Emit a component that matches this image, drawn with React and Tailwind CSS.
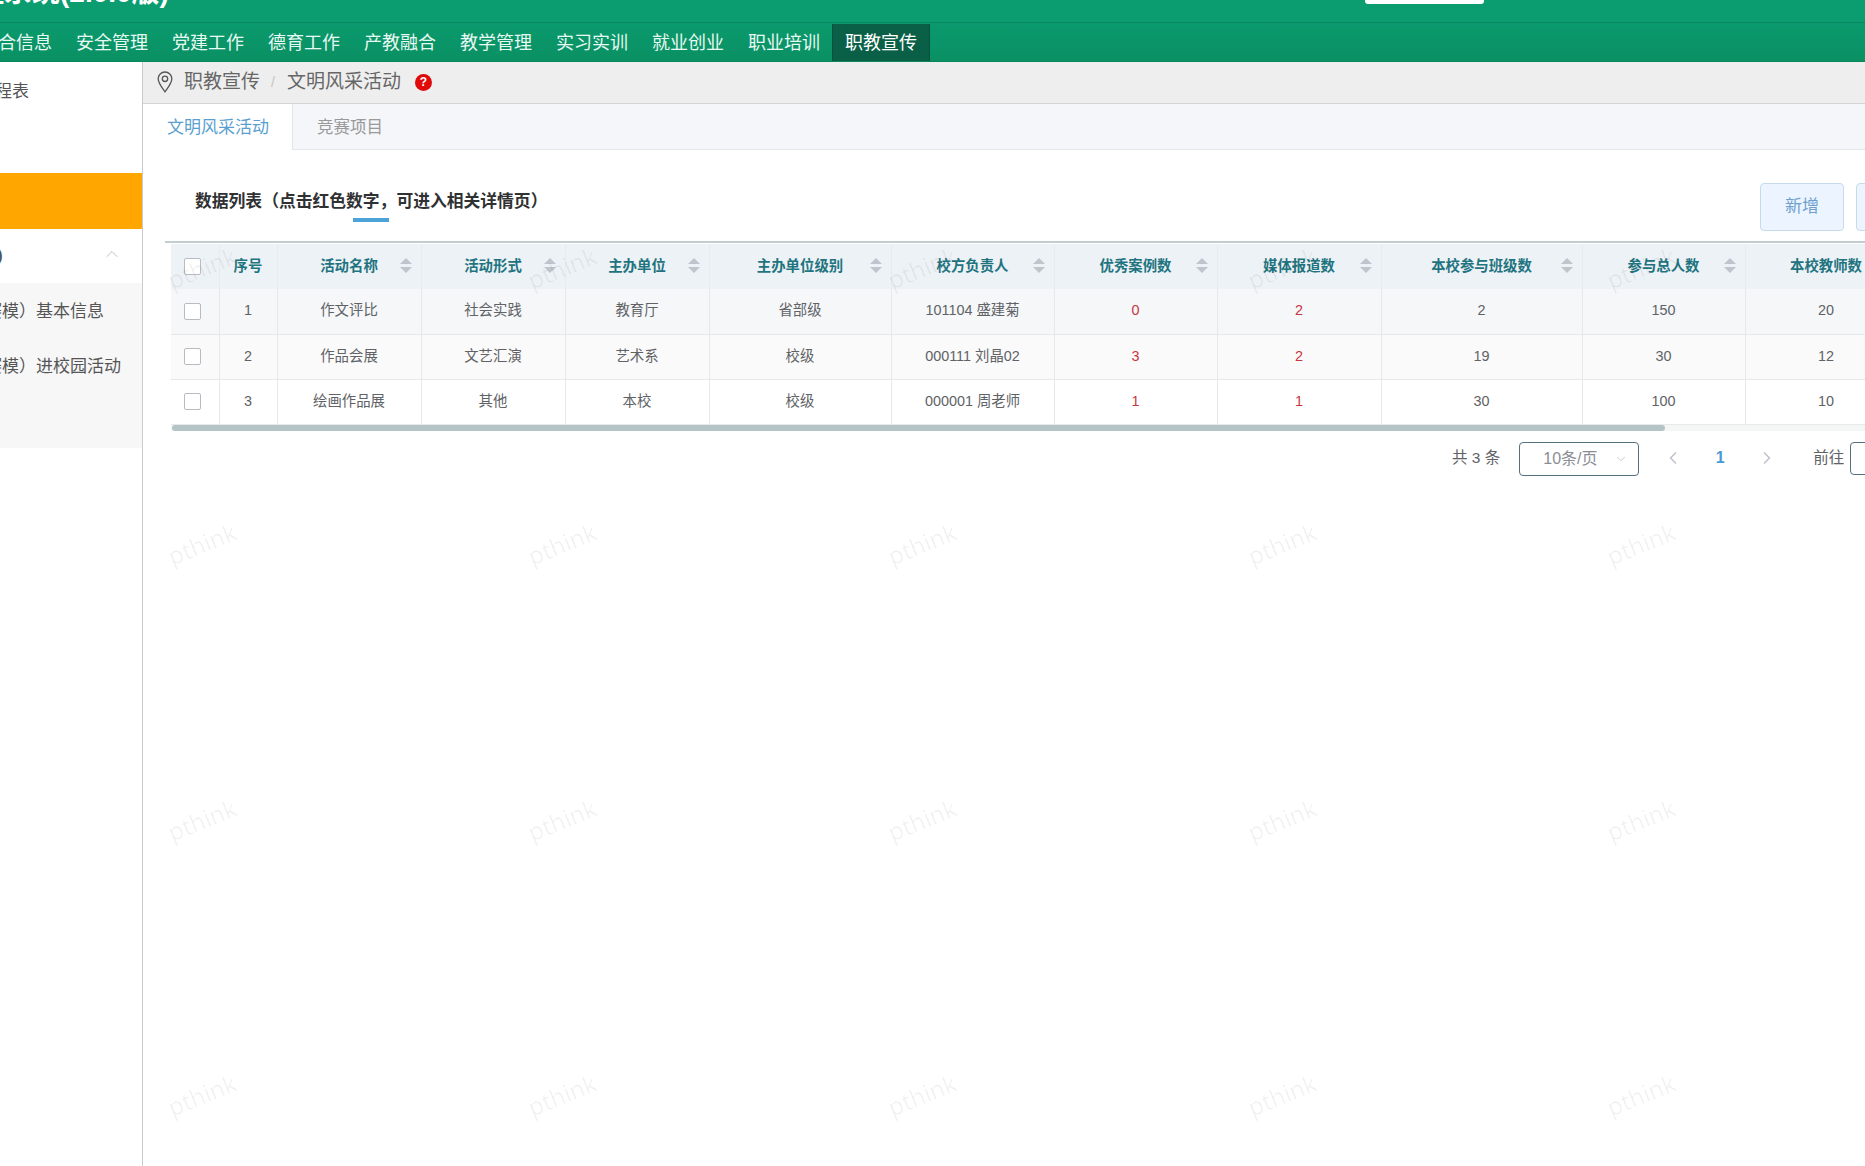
import React from "react";
import { ChevronUp, ChevronDown, ChevronLeft, ChevronRight } from "lucide-react";

const navItems = ["综合信息", "安全管理", "党建工作", "德育工作", "产教融合", "教学管理", "实习实训", "就业创业", "职业培训"];

const columns = [
  { title: "", w: "w-[48px]" },
  { title: "序号", w: "w-[58px]" },
  { title: "活动名称", w: "w-[144px]", sort: true },
  { title: "活动形式", w: "w-[144px]", sort: true },
  { title: "主办单位", w: "w-[144px]", sort: true },
  { title: "主办单位级别", w: "w-[182px]", sort: true },
  { title: "校方负责人", w: "w-[163px]", sort: true },
  { title: "优秀案例数", w: "w-[163px]", sort: true },
  { title: "媒体报道数", w: "w-[164px]", sort: true },
  { title: "本校参与班级数", w: "w-[201px]", sort: true },
  { title: "参与总人数", w: "w-[163px]", sort: true },
  { title: "本校教师数", w: "w-[162px]", sort: true },
];

const rows = [
  { bg: "bg-[#f5f7f9]", cells: ["1", "作文评比", "社会实践", "教育厅", "省部级", "101104 盛建菊", "0", "2", "2", "150", "20"] },
  { bg: "bg-[#fafafa]", cells: ["2", "作品会展", "文艺汇演", "艺术系", "校级", "000111 刘晶02", "3", "2", "19", "30", "12"] },
  { bg: "bg-white", cells: ["3", "绘画作品展", "其他", "本校", "校级", "000001 周老师", "1", "1", "30", "100", "10"] },
];

const marks = [];
[268, 544, 820, 1095].forEach((y) => {
  [202, 562, 922, 1282, 1641].forEach((x) => marks.push({ x, y }));
});

function Caret() {
  return (
    <svg width="12" height="15" viewBox="0 0 12 15" className="absolute right-[9px] top-[14px]">
      <polygon points="6,0 12,6 0,6" fill="#c0c4cc" />
      <polygon points="0,9 12,9 6,15" fill="#c0c4cc" />
    </svg>
  );
}

function Checkbox() {
  return <span className="block ml-[13px] w-[17px] h-[17px] rounded-[2px] border border-[#b8bcc2] bg-white" />;
}

function Pin() {
  return (
    <svg width="16" height="22" viewBox="0 0 16 22" fill="none" stroke="#555" strokeWidth="1.3" className="ml-[14px] mb-[2px] shrink-0">
      <path d="M8 1C4.2 1 1.2 4 1.2 7.8c0 4.6 4.8 10.2 6.8 13 2-2.8 6.8-8.4 6.8-13C14.8 4 11.8 1 8 1z" />
      <circle cx="8" cy="7.8" r="2.7" />
    </svg>
  );
}

export default function App() {
  return (
    <div className="relative w-[1865px] h-[1166px] overflow-hidden bg-white text-[#606266] font-['Liberation_Sans','Noto_Sans_CJK_SC',sans-serif]">
      <div className="h-[23px] bg-[#0b9c70] border-b border-[#0a855f] relative overflow-hidden">
        <div className="-mt-[27px] -ml-[52px] h-[40px] leading-[40px] text-[28px] font-bold text-white whitespace-nowrap">管理系统(2.0.0版)</div>
        <div className="absolute left-[1365px] top-0 w-[119px] h-[4px] bg-white rounded-b-[3px]" />
      </div>

      <div className="h-[39px] flex bg-gradient-to-b from-[#0a9a6d] to-[#0a9063] border-b border-[#0a8659] overflow-hidden">
        <div className="-ml-[32px] flex h-full">
          {navItems.map((n) => (
            <div key={n} className="px-[12px] leading-[41px] text-[18px] text-[#e8f8f2] whitespace-nowrap">{n}</div>
          ))}
          <div className="mt-[1px] w-[98px] text-center bg-[#0a5f47] border-x border-[#075040] leading-[39px] text-[18px] text-white whitespace-nowrap">职教宣传</div>
        </div>
      </div>

      <div className="flex h-[1104px]">
        <aside className="w-[143px] shrink-0 border-r border-[#c8ccd0] overflow-hidden text-[17px] text-[#555] whitespace-nowrap">
          <div className="h-[56px] leading-[59px] -ml-[22px]">课程表</div>
          <div className="h-[55px]" />
          <div className="h-[56px] bg-[#ffa600]" />
          <div className="h-[54px] relative">
            <div className="-ml-[37px] leading-[53px] font-bold">大赛)</div>
            <ChevronUp className="absolute left-[102px] top-[15px] text-[#b0b4b8]" size={20} strokeWidth={1} />
          </div>
          <div className="h-[165px] bg-[#f7f7f8]">
            <div className="h-[56px] leading-[58px] -ml-[49px]">（大赛模）基本信息</div>
            <div className="h-[56px] leading-[56px] -ml-[49px]">（大赛模）进校园活动</div>
          </div>
        </aside>

        <main className="flex-1 min-w-0 overflow-hidden">
          <div className="h-[42px] bg-[#eeeeee] border-b border-[#d2d4d6] flex items-center whitespace-nowrap">
            <Pin />
            <span className="ml-[11px] text-[19px] text-[#666]">职教宣传</span>
            <span className="ml-[11px] text-[14px] text-[#c4c4c4]">/</span>
            <span className="ml-[12px] text-[19px] text-[#666]">文明风采活动</span>
            <span className="ml-[14px] mb-[1px] w-[17px] h-[17px] rounded-full bg-[#e00a0a] text-white text-[12px] font-bold leading-[17px] text-center">?</span>
          </div>

          <div className="h-[46px] flex bg-[#f4f6f9] border-b border-[#e4e7ed]">
            <div className="w-[150px] h-[46px] bg-white border-r border-[#dfe4ea] text-[17px] text-[#5a9fcf] pl-[24px] leading-[47px] whitespace-nowrap">文明风采活动</div>
            <div className="pl-[24px] text-[16.5px] text-[#999] leading-[47px] whitespace-nowrap">竞赛项目</div>
          </div>

          <div className="pl-[22px]">
            <div className="h-[91px] flex pt-[33px]">
              <div className="pl-[30px]">
                <div className="mt-[7px] text-[16.8px] leading-[24px] font-bold text-[#303133] whitespace-nowrap">数据列表（点击红色数字，可进入相关详情页）</div>
                <div className="mt-[4px] ml-[158px] w-[36px] h-[4px] bg-[#4ba3d8]" />
              </div>
              <div className="ml-auto -mr-[75px] flex gap-[12px] shrink-0">
                <button className="w-[84px] h-[48px] rounded-[4px] border border-[#c6dbea] bg-[#ecf5ff] text-[17px] text-[#6f9fcf]">新增</button>
                <button className="w-[84px] h-[48px] rounded-[4px] border border-[#c6dbea] bg-[#ecf5ff] text-[17px] text-[#6f9fcf]">导出</button>
              </div>
            </div>

            <div className="border-t-2 border-[#c3cccf] pt-[1px] pl-[6px]">
              <table className="table-fixed border-collapse w-[1736px] text-[14.4px]">
                <thead>
                  <tr className="h-[45px] bg-[#edf2f7]">
                    {columns.map((c, i) => (
                      <th key={i} className={`${c.w} relative border-r border-[#e6ebf0] p-0 font-bold text-[#1f7480] text-center whitespace-nowrap`}>
                        {i === 0 ? <Checkbox /> : c.title}
                        {c.sort && <Caret />}
                      </th>
                    ))}
                  </tr>
                </thead>
                <tbody>
                  {rows.map((r) => (
                    <tr key={r.cells[0]} className={`h-[45px] ${r.bg} border-b border-[#e6e8ea]`}>
                      <td className="border-r border-[#e6e8ea] p-0"><Checkbox /></td>
                      {r.cells.map((t, i) => (
                        <td key={i} className={`border-r border-[#e6e8ea] p-0 text-center whitespace-nowrap ${i === 6 || i === 7 ? "text-[#c8353f]" : ""}`}>{t}</td>
                      ))}
                    </tr>
                  ))}
                </tbody>
              </table>
              <div className="h-[6px] bg-[#f4f6f6]">
                <div className="h-[6px] w-[1493px] ml-[1px] rounded-[3px] bg-[#b4c4c6]" />
              </div>
            </div>

            <div className="pl-[1287px] pt-[11px] flex items-center h-[45px] whitespace-nowrap text-[#606266]">
              <span className="w-[49px] text-[15.5px] mb-[2px]">共 3 条</span>
              <div className="ml-[19px] w-[120px] h-[34px] shrink-0 rounded-[4px] border border-[#54707e] flex items-center pl-[23px] pr-[10px] text-[16px] text-[#8a8e94]">
                <span>10条/页</span>
                <ChevronDown className="ml-auto text-[#c0c4cc]" size={14} strokeWidth={1.5} />
              </div>
              <ChevronLeft className="ml-[24px] mb-[2px] shrink-0 text-[#c0c4cc]" size={20} strokeWidth={2} />
              <span className="ml-[27px] mb-[2px] w-[20px] text-center shrink-0 text-[16px] font-bold text-[#4a9ad4]">1</span>
              <ChevronRight className="ml-[27px] mb-[2px] shrink-0 text-[#c0c4cc]" size={20} strokeWidth={2} />
              <span className="ml-[36px] mb-[2px] shrink-0 text-[15.5px]">前往</span>
              <div className="ml-[6px] w-[60px] h-[33px] shrink-0 rounded-[4px] border border-[#54707e]" />
            </div>
          </div>
        </main>
      </div>

      {marks.map((m) => (
        <div
          key={`${m.x}-${m.y}`}
          className="absolute pointer-events-none w-[100px] -ml-[50px] h-[32px] -mt-[16px] text-center -rotate-[22deg] text-[24px] leading-[32px] text-black/[0.06] font-['Open_Sans',sans-serif]"
          style={{ left: m.x, top: m.y }}
        >
          pthink
        </div>
      ))}
    </div>
  );
}
